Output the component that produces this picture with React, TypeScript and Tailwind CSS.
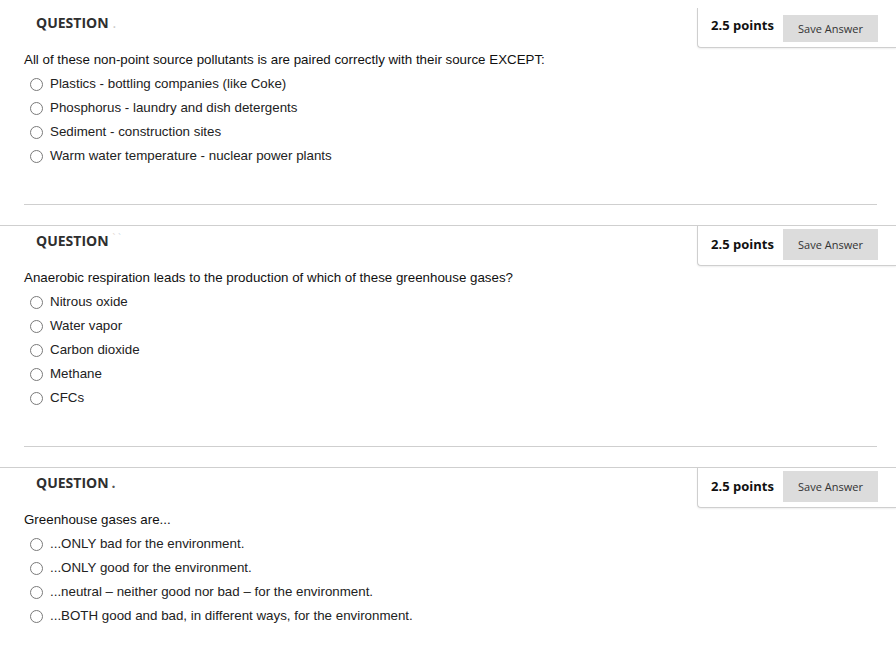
import React from "react";

type Q = {
  text: string;
  options: string[];
  suffix: React.ReactNode;
  first?: boolean;
};

const questions: Q[] = [
  {
    text: "All of these non-point source pollutants is are paired correctly with their source EXCEPT:",
    options: [
      "Plastics - bottling companies (like Coke)",
      "Phosphorus - laundry and dish detergents",
      "Sediment - construction sites",
      "Warm water temperature - nuclear power plants",
    ],
    suffix: <span className="ml-[4px] text-[#c8c8c8] font-normal">.</span>,
    first: true,
  },
  {
    text: "Anaerobic respiration leads to the production of which of these greenhouse gases?",
    options: ["Nitrous oxide", "Water vapor", "Carbon dioxide", "Methane", "CFCs"],
    suffix: (
      <span className="ml-[4px] text-[#e4d8d0] font-normal text-[10px] relative top-[-4px]">
        ` <span className="text-[#d0dde8]">`</span>
      </span>
    ),
  },
  {
    text: "Greenhouse gases are...",
    options: [
      "...ONLY bad for the environment.",
      "...ONLY good for the environment.",
      "...neutral \u2013 neither good nor bad \u2013 for the environment.",
      "...BOTH good and bad, in different ways, for the environment.",
    ],
    suffix: <span className="ml-[3px] text-[#555]">.</span>,
  },
];

function Section({ q, last }: { q: Q; last: boolean }) {
  return (
    <div className={q.first ? "border-t border-transparent" : "border-t border-[#cfcfcf]"}>
      <div className="flex h-[39px] items-start">
        <div
          className="pl-[36px] pt-[5px] text-[14px] leading-[20px] font-bold text-[#2f2f2f]"
          style={{ fontFamily: '"Open Sans", sans-serif' }}
        >
          QUESTION
          {q.suffix}
        </div>
        <div className="ml-auto w-[199px] h-[40px] shrink-0 border-l border-b border-[#cfcfcf] rounded-bl-[4px] shadow-[0_1px_2px_rgba(0,0,0,0.07)] bg-white">
          <div
            className={
              q.first
                ? "flex items-start pl-[13px] pt-[7px]"
                : "flex items-center pl-[13px] pt-[3px]"
            }
            style={{ fontFamily: '"Open Sans", sans-serif' }}
          >
            <span
              className={
                "text-[13px] font-bold text-[#111] w-[72px] " +
                (q.first ? "leading-[21px]" : "leading-[31px]")
              }
            >
              2.5 points
            </span>
            <button
              className={
                "w-[95px] bg-[#dcdcdc] text-[11px] text-[#333] " +
                (q.first ? "h-[27px] leading-[27px]" : "h-[31px] leading-[31px]")
              }
            >
              Save Answer
            </button>
          </div>
        </div>
      </div>
      <div className="pt-[1px]" style={{ fontFamily: '"Liberation Sans", Arial, sans-serif' }}>
        <div className="pl-[24px] text-[13.33px] leading-[24px] text-[#111]">{q.text}</div>
        {q.options.map((o) => (
          <div key={o} className="flex items-center pl-[30px] h-[24px] text-[13.33px] text-[#222]">
            <span className="w-[13px] h-[13px] rounded-full border border-[#7a7a7a] bg-white shrink-0" />
            <span className="ml-[7px]">{o}</span>
          </div>
        ))}
      </div>
      {!last && (
        <div className="mt-[36px] mb-[20px] ml-[24px] mr-[19px] border-t border-[#cfcfcf]" />
      )}
    </div>
  );
}

export default function App() {
  return (
    <div className="w-[896px] h-[664px] bg-white overflow-hidden pt-[7px]">
      {questions.map((q, i) => (
        <Section key={i} q={q} last={i === questions.length - 1} />
      ))}
    </div>
  );
}
